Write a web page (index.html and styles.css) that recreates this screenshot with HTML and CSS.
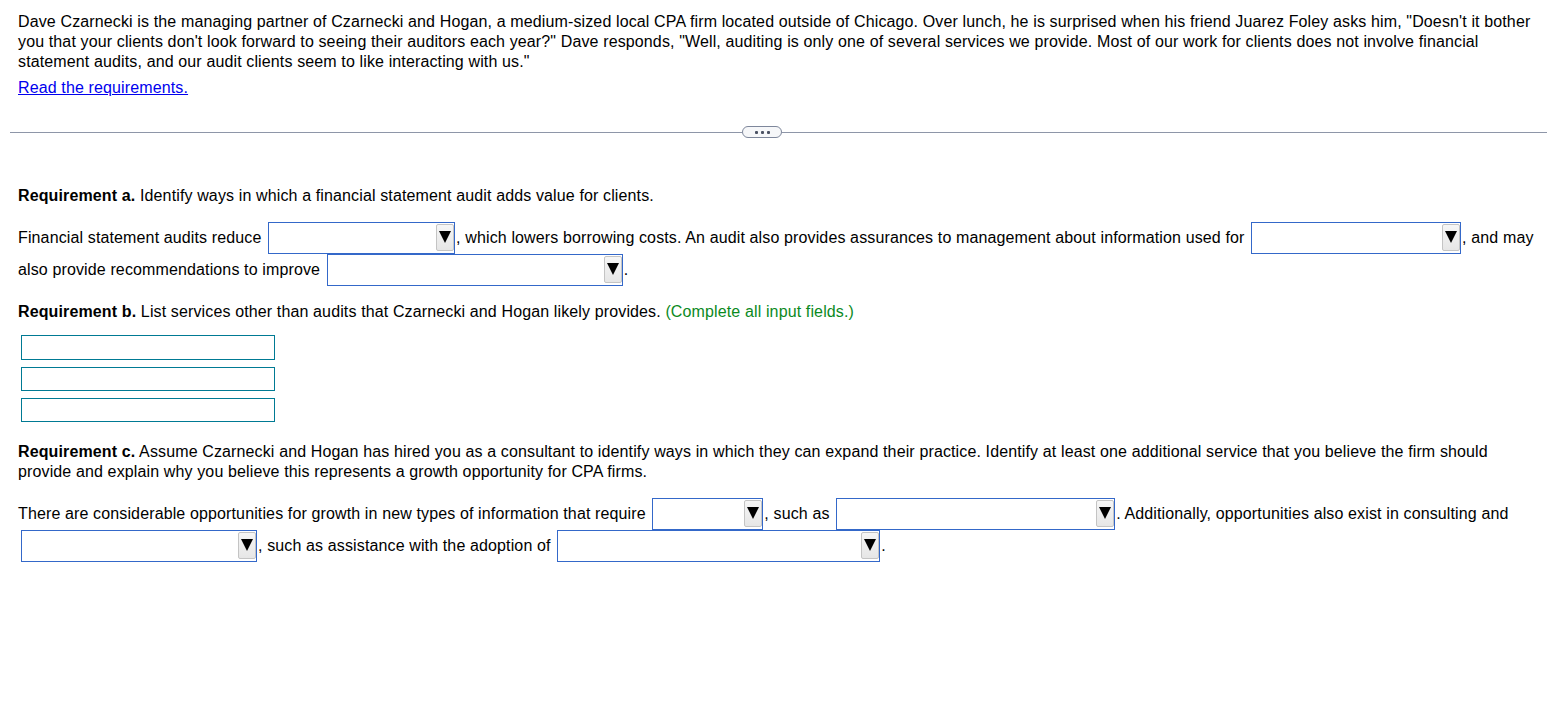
FILE: index.html
```html
<!DOCTYPE html>
<html>
<head>
<meta charset="utf-8">
<link rel="stylesheet" href="styles.css">
</head>
<body>
<div class="page">
  <div class="intro">
    <p class="story">Dave Czarnecki is the managing partner of Czarnecki and Hogan, a medium-sized local CPA firm located outside of Chicago. Over lunch, he is surprised when his friend Juarez Foley asks him, "Doesn't it bother you that your clients don't look forward to seeing their auditors each year?" Dave responds, "Well, auditing is only one of several services we provide. Most of our work for clients does not involve financial statement audits, and our audit clients seem to like interacting with us."</p>
    <a class="req-link" href="#">Read the requirements.</a>
  </div>

  <div class="divider">
    <span class="rule rule-left"></span>
    <span class="more"><i></i><i></i><i></i></span>
    <span class="rule"></span>
  </div>

  <div class="content">
    <p class="req-title"><b>Requirement a.</b> Identify ways in which a financial statement audit adds value for clients.</p>
    <p class="fill fill-a">Financial statement audits reduce <span class="dd w-a1"><span class="arrow"></span></span>, which lowers borrowing costs. An audit also provides assurances to management about information used for <span class="dd w-a2"><span class="arrow"></span></span>, and may also provide recommendations to improve <span class="dd w-a3"><span class="arrow"></span></span>.</p>

    <p class="req-title req-b"><b>Requirement b.</b> List services other than audits that Czarnecki and Hogan likely provides. <span class="hint">(Complete all input fields.)</span></p>
    <div class="inputs">
      <span class="tb"></span>
      <span class="tb"></span>
      <span class="tb"></span>
    </div>

    <p class="req-title req-c"><b>Requirement c.</b> Assume Czarnecki and Hogan has hired you as a consultant to identify ways in which they can expand their practice. Identify at least one additional service that you believe the firm should provide and explain why you believe this represents a growth opportunity for CPA firms.</p>
    <p class="fill fill-c">There are considerable opportunities for growth in new types of information that require <span class="dd w-c1"><span class="arrow"></span></span>, such as <span class="dd w-c2"><span class="arrow"></span></span>. Additionally, opportunities also exist in consulting and <span class="dd w-c3 first"><span class="arrow"></span></span>, such as assistance with the adoption of <span class="dd w-c4"><span class="arrow"></span></span>.</p>
  </div>
</div>
</body>
</html>
```

FILE: styles.css
```css
html, body {
  margin: 0;
  padding: 0;
  background: #ffffff;
}

body {
  font-family: "Liberation Sans", Arial, sans-serif;
  font-size: 16px;
  letter-spacing: 0.13px;
  color: #000000;
}

.page {
  padding: 12px 0 0 10px;
  width: 1537px;
}

.intro {
  padding-left: 8px;
  padding-right: 10px;
}

.story {
  margin: 0;
  line-height: 20px;
}

.req-link {
  display: inline-block;
  margin-top: 6px;
  line-height: 20px;
  color: #0000ee;
  text-decoration: underline;
}

.divider {
  display: flex;
  align-items: center;
  margin-top: 28px;
}

.rule {
  flex: 1;
  height: 1px;
  background: #8e96a8;
}

.rule-left {
  flex: 0 0 732px;
}

.more {
  display: flex;
  align-items: center;
  justify-content: center;
  gap: 3px;
  width: 38px;
  height: 10px;
  border: 1px solid #7e879b;
  border-radius: 6px;
  background: #f6f7f9;
}

.more i {
  display: block;
  width: 3px;
  height: 3px;
  background: #4b5263;
  border-radius: 1px;
}

.content {
  padding-left: 8px;
  padding-right: 10px;
  margin-top: 48px;
}

.req-title {
  margin: 0;
  line-height: 20px;
}

.hint {
  color: #0b8a1e;
}

.fill {
  margin: 16px 0 0 0;
  line-height: 32px;
}

.req-b {
  margin-top: 16px;
}

.req-c {
  margin-top: 20px;
}

.fill-c {
  margin-top: 16px;
}

.dd {
  display: inline-block;
  position: relative;
  box-sizing: border-box;
  height: 32px;
  vertical-align: top;
  border: 1px solid #3468c9;
  background: #ffffff;
  margin: 0 1px 0 2px;
}

.dd.first {
  margin-left: 3px;
}

.arrow {
  position: absolute;
  right: 0;
  top: 1px;
  width: 18px;
  height: 27px;
  box-sizing: border-box;
  border: 1px solid #c4c4c4;
  border-radius: 2px;
  background: linear-gradient(#f6f6f6, #e6e6e6);
}

.arrow::after {
  content: "";
  position: absolute;
  left: 2px;
  top: 6px;
  border-left: 6px solid transparent;
  border-right: 6px solid transparent;
  border-top: 12px solid #000000;
}

.w-a1 { width: 187px; }
.w-a2 { width: 210px; }
.w-a3 { width: 296px; }
.w-c1 { width: 111px; }
.w-c2 { width: 279px; }
.w-c3 { width: 236px; }
.w-c4 { width: 323px; }

.inputs {
  display: flex;
  flex-direction: column;
  gap: 7px;
  margin-top: 13px;
  padding-left: 3px;
}

.tb {
  display: block;
  box-sizing: border-box;
  width: 254px;
  height: 24px;
  border: 1px solid #007a94;
  background: #ffffff;
}

.tb:first-child {
  height: 25px;
}
```
